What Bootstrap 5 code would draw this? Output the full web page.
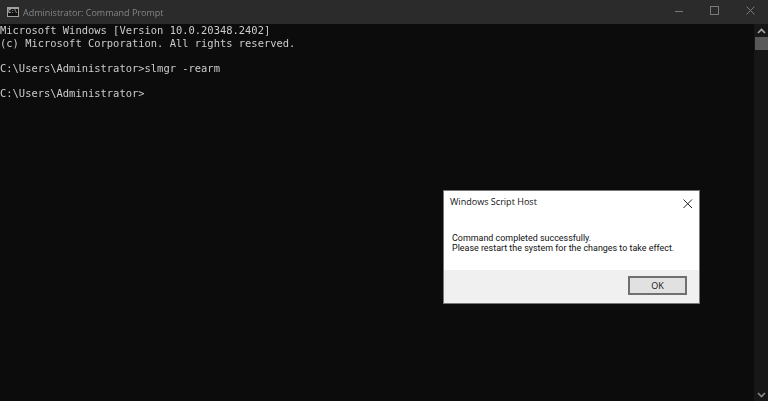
<!DOCTYPE html>
<html lang="en"><head><meta charset="utf-8">
<link href="https://cdn.jsdelivr.net/npm/bootstrap@5.3.0/dist/css/bootstrap.min.css" rel="stylesheet">
<style>
html,body{width:768px;height:401px;overflow:hidden;background:#0c0c0c}
.shell{width:768px;height:401px;filter:blur(.35px)}
.tbar{height:24px;background:#2b2b2b;color:#858585;font:9px "Open Sans","Liberation Sans",sans-serif}
.tbar-ic{width:12px;height:10px;margin-left:7px;margin-right:4px;margin-top:-1px;background:#111;border:1px solid #a0a0a0;border-top-width:2px;color:#ddd;font:bold 5px/6px "Liberation Mono",monospace;overflow:hidden}
.wbtn{width:36px;height:24px;margin-top:-2px}
.wbtn-end{margin-right:-1px}
.term{background:#0c0c0c;min-height:0}
.out{margin:0;padding:0;color:#cccccc;font:10.45px/12.6px "DejaVu Sans Mono","Liberation Mono",monospace;white-space:pre}
.sbar{width:14px;background:#171717;flex:none}
.sthumb{height:13px;background:#585858;margin-left:1px}
.sarr{height:13px}
.dlg{position:absolute;left:443px;top:190px;width:257px;height:114px;background:#fff;border:1px solid #777;font-family:"Open Sans","Liberation Sans",sans-serif;color:#111}
.dlg-h{height:22px;padding:4px 6px 0 6px;font-size:9.05px}
.dlg-b{height:57px;padding:20px 0 0 8px;font:8.94px/10px Roboto,"Liberation Sans",sans-serif;color:#111}
.dlg-f{height:33px;background:#f0f0f0;padding:6px 12px 0 0}
.okbtn{width:59px;height:19px;background:#e1e1e1;border:2px solid #707070;border-radius:0;color:#111;font-size:9px;line-height:13px;padding:0}
</style></head><body>
<div class="shell d-flex flex-column position-relative">
 <div class="tbar d-flex align-items-center flex-none">
  <div class="tbar-ic">C:\</div>
  <div class="flex-grow-1">Administrator: Command Prompt</div>
  <div class="wbtn d-flex align-items-center justify-content-center"><svg width="10" height="10" viewBox="0 0 10 10"><path d="M1 5.5h8" stroke="#7a7a7a" fill="none"/></svg></div>
  <div class="wbtn d-flex align-items-center justify-content-center"><svg width="10" height="10" viewBox="0 0 10 10"><rect x=".5" y=".5" width="8" height="8" stroke="#7a7a7a" fill="none"/></svg></div>
  <div class="wbtn wbtn-end d-flex align-items-center justify-content-center"><svg width="10" height="10" viewBox="0 0 10 10"><path d="M.5.5l8 8M8.5.5l-8 8" stroke="#7a7a7a" fill="none"/></svg></div>
 </div>
 <div class="term flex-grow-1 d-flex">
  <pre class="out flex-grow-1">Microsoft Windows [Version 10.0.20348.2402]
(c) Microsoft Corporation. All rights reserved.

C:\Users\Administrator&gt;slmgr -rearm

C:\Users\Administrator&gt;</pre>
  <div class="sbar d-flex flex-column">
   <div class="sarr d-flex align-items-center justify-content-center"><svg width="9" height="6" viewBox="0 0 9 6"><path d="M1 5l3.5-3.5L8 5" stroke="#aaa" stroke-width="1.6" fill="none"/></svg></div>
   <div class="sthumb"></div>
   <div class="flex-grow-1"></div>
   <div class="sarr d-flex align-items-center justify-content-center"><svg width="9" height="6" viewBox="0 0 9 6"><path d="M1 1l3.5 3.5L8 1" stroke="#888" stroke-width="1.6" fill="none"/></svg></div>
  </div>
 </div>
 <div class="dlg d-flex flex-column">
  <div class="dlg-h d-flex justify-content-between"><span>Windows Script Host</span><svg class="mt-1" width="10" height="10" viewBox="0 0 10 10"><path d="M.5.5l8.5 8.5M9 .5L.5 9" stroke="#222" fill="none"/></svg></div>
  <div class="dlg-b">Command completed successfully.<br>Please restart the system for the changes to take effect.</div>
  <div class="dlg-f flex-grow-1 d-flex justify-content-end align-items-start"><button class="btn okbtn">OK</button></div>
 </div>
</div>
</body></html>
